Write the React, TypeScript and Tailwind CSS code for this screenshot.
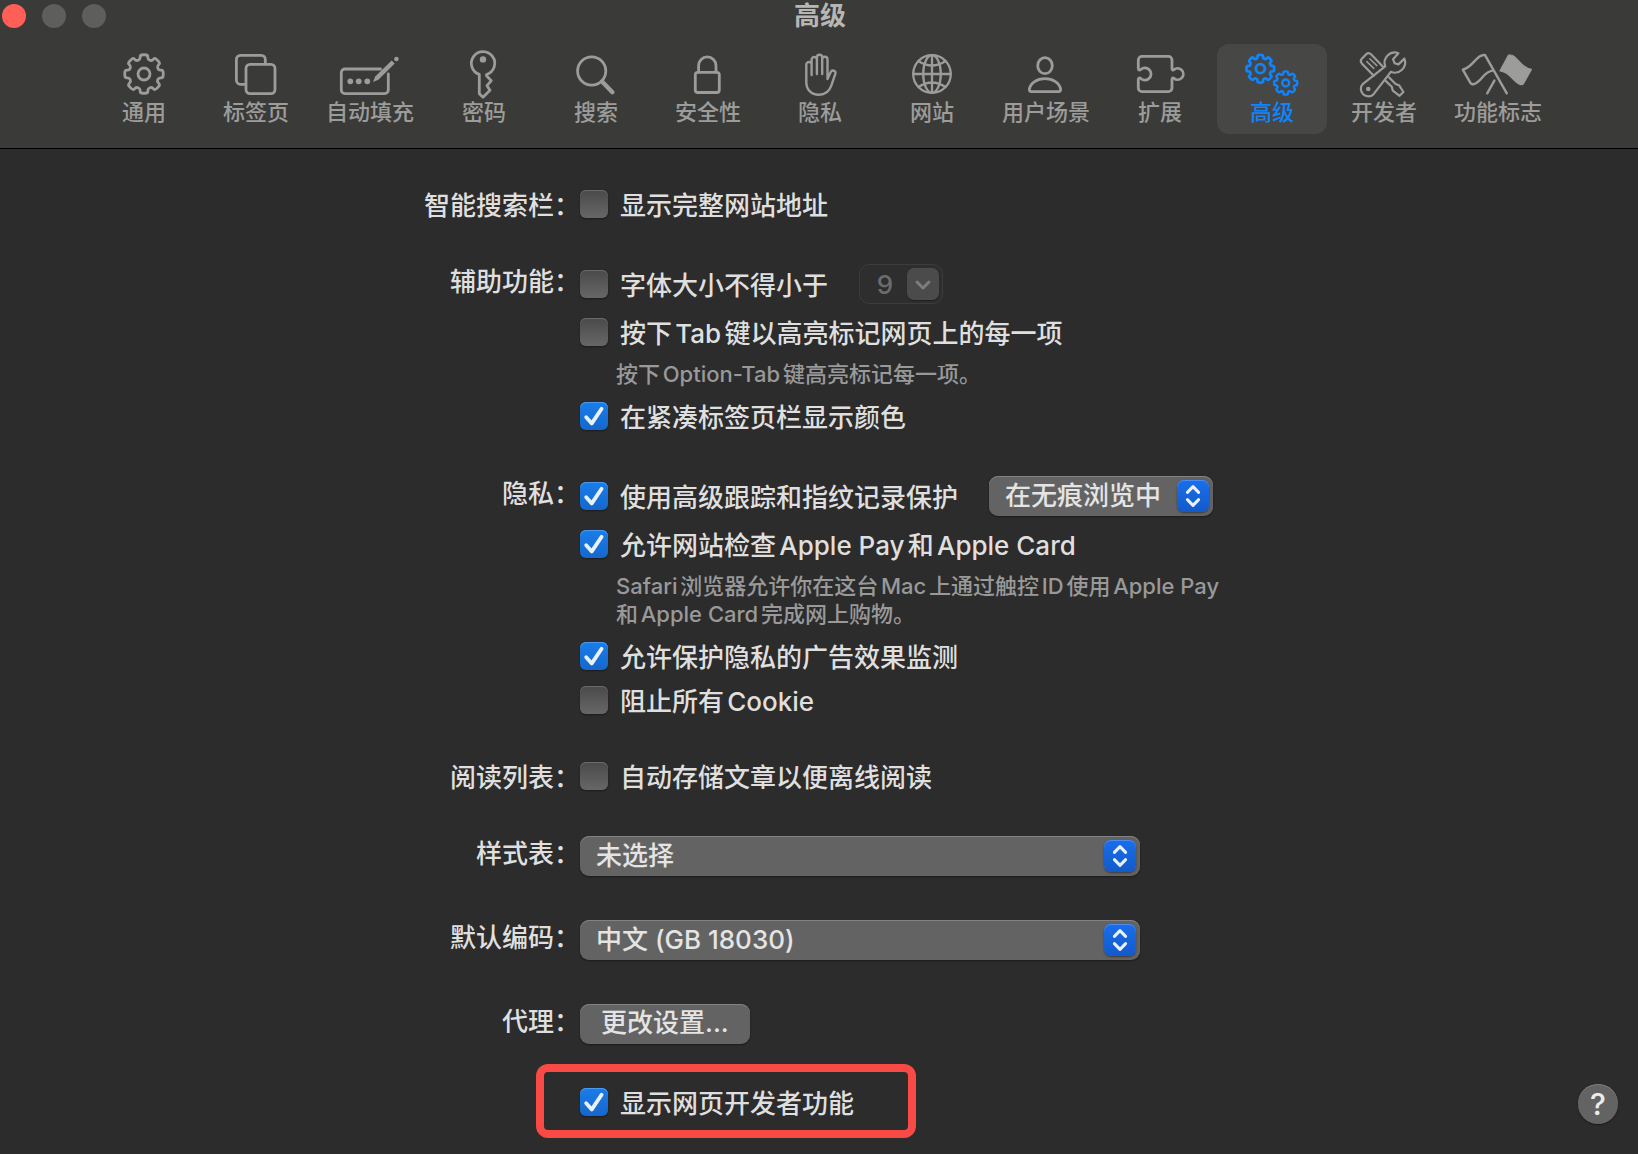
import { useState } from 'react'
import type { ReactNode } from 'react'

type Point = [number, number]

// Closed outline of a toothed wheel, with every corner softened
function gearPath(cx: number, cy: number, r: number) {
  const pts: Point[] = []
  const at = (deg: number, radius: number): Point => {
    const a = ((deg - 90) * Math.PI) / 180
    return [cx + Math.cos(a) * radius, cy + Math.sin(a) * radius]
  }
  for (let i = 0; i < 8; i++) {
    const a = i * 45
    pts.push(at(a - 15, r * 0.77), at(a - 11, r), at(a + 11, r), at(a + 15, r * 0.77))
  }
  const mix = (p: Point, q: Point, t: number) =>
    `${(p[0] + (q[0] - p[0]) * t).toFixed(2)} ${(p[1] + (q[1] - p[1]) * t).toFixed(2)}`
  const n = pts.length
  return (
    pts
      .map((p, i) => {
        const prev = pts[(i + n - 1) % n]
        const next = pts[(i + 1) % n]
        return `${i === 0 ? 'M' : 'L'}${mix(p, prev, 0.4)}Q${p[0].toFixed(2)} ${p[1].toFixed(2)} ${mix(p, next, 0.4)}`
      })
      .join('') + 'Z'
  )
}

const ICONS: Record<string, ReactNode> = {
  general: (
    <>
      <path d={gearPath(40, 26, 19.6)} />
      <circle cx="40" cy="26" r="6" />
    </>
  ),
  tabs: (
    <>
      <path d="M49.3 14.5V11.4a4 4 0 0 0-4-4H24.4a4 4 0 0 0-4 4V32.3a4 4 0 0 0 4 4H28.5" />
      <rect x="30" y="16.4" width="29" height="29.2" rx="4" />
    </>
  ),
  autofill: (
    <>
      <path d="M50.5 21H15a3.7 3.7 0 0 0-3.7 3.7V42a3.7 3.7 0 0 0 3.7 3.7H54.6a3.7 3.7 0 0 0 3.7-3.7V26" />
      <g fill="currentColor" stroke="none">
        <circle cx="20.3" cy="33.3" r="2.9" />
        <circle cx="28.7" cy="33.3" r="2.9" />
        <circle cx="37.3" cy="33.3" r="2.9" />
        <path d="M43 34l2.2-5.4L61.7 12.6l3 3L48.4 31.8z" />
        <circle cx="66.4" cy="11" r="2.3" />
      </g>
    </>
  ),
  passwords: (
    <>
      <path d="M35.3 26.4A11.7 11.7 0 1 1 42.5 26.5V27.8L47.3 32.7 43 37.7 46 42.3 39 49.2 35.3 45.8Z" />
      <circle cx="39" cy="11.4" r="3.2" fill="currentColor" stroke="none" />
    </>
  ),
  search: (
    <>
      <circle cx="35.7" cy="23" r="14.1" />
      <path d="M46 33.5L56.4 44.2" strokeWidth="4.4" />
    </>
  ),
  security: (
    <>
      <rect x="27.3" y="24.3" width="24" height="20.2" rx="2.5" />
      <path d="M30.6 24V17.6a8.7 8.7 0 0 1 17.4 0V24" />
    </>
  ),
  privacy: (
    <path
      strokeWidth="2.4"
      d="M31.6 27V16.6a2.65 2.65 0 0 0-5.3 0V34C26.3 41.5 31 46.7 39 46.7 45.6 46.7 49.4 43 51.3 37.6L55.3 25.8C56.2 22.6 52 21.4 50.6 24.2L47.5 31V11.4a2.65 2.65 0 0 0-5.3 0V26V9.4a2.65 2.65 0 0 0-5.3 0V26V11.6a2.65 2.65 0 0 0-5.3 0V22"
    />
  ),
  websites: (
    <g strokeWidth="2.3">
      <circle cx="40" cy="26" r="18.8" />
      <ellipse cx="40" cy="26" rx="8.8" ry="18.8" />
      <path d="M40 7.2V44.8M21.2 26H58.8M26.4 13Q40 22 53.6 13M26.4 39Q40 30 53.6 39" />
    </g>
  ),
  profiles: (
    <>
      <ellipse cx="39" cy="17.7" rx="7.3" ry="8" />
      <path d="M25.4 43.6C23.8 43.6 23.2 42.6 23.4 41.2 24.3 35 31 30.6 39 30.6S53.7 35 54.6 41.2C54.8 42.6 54.2 43.6 52.6 43.6Z" />
    </>
  ),
  extensions: (
    <path d="M22 8.3H48.3A3.7 3.7 0 0 1 52 12V20.4C52 22.2 53 22.6 54 21.6A5.7 5.7 0 1 1 54 30.4C53 29.4 52 29.8 52 31.6V40A3.7 3.7 0 0 1 48.3 43.7H22A3.7 3.7 0 0 1 18.3 40V31.6C18.3 29.8 19.6 29.4 20.8 30.5A6.1 6.1 0 1 0 20.8 21.5C19.6 22.6 18.3 22.2 18.3 20.4V12A3.7 3.7 0 0 1 22 8.3Z" />
  ),
  advanced: (
    <>
      <path d={gearPath(28.3, 20.7, 14.1)} />
      <circle cx="28.3" cy="20.7" r="4.5" />
      <path d={gearPath(53.7, 35, 11.8)} strokeWidth="2.4" />
      <circle cx="53.7" cy="35" r="3.5" strokeWidth="2.4" />
    </>
  ),
  developer: (
    <g strokeWidth="2.2">
      <path d="M29.8 27.8L17.8 15.4C16.4 13.8 16.5 12.2 17.8 10.8L22.2 6.2C23.8 4.9 25.6 4.9 27 6.3L39 18.8" />
      <path d="M22.8 13.6L29.8 20.4M25.8 10.8L32.8 17.6" strokeWidth="1.5" />
      <path d="M41.4 32.6L47.8 38.8 48.8 42.6 55.6 47.8 59.4 44 55 37.2 51.6 36 44.9 29.2" />
      <path d="M54.4 5.2A10.3 10.3 0 0 0 41.2 18.4L19 35.8A7.4 7.4 0 1 0 29.6 46.2L46.8 23.8A10.3 10.3 0 0 0 60.4 10.6L54.4 16.4 50.6 15.2 49 11.2Z" />
      <circle cx="24.3" cy="41" r="2.3" fill="currentColor" stroke="none" />
    </g>
  ),
  flags: (
    <g strokeWidth="2.4">
      <path d="M48.8 45.3L26.9 6.9C18.6 6.3 14.6 19.6 4.8 21.6L12.4 34.8C13.2 36.2 14.4 36.4 16 36C24.2 33.4 25.4 23.4 34.8 22.6" />
      <path d="M36.4 32.6L29.2 45.3" />
      <path
        d="M50.4 7.2C59 5.2 61 19.6 73.4 21.4L65.6 35.4C64.8 36.8 63.4 37 61.8 36.4C54.6 34 52.2 23.6 42 22.8Z"
        fill="currentColor"
        strokeWidth="1.2"
      />
    </g>
  ),
}

const TABS = [
  { id: 'general', label: '通用' },
  { id: 'tabs', label: '标签页' },
  { id: 'autofill', label: '自动填充', wide: true },
  { id: 'passwords', label: '密码' },
  { id: 'search', label: '搜索' },
  { id: 'security', label: '安全性' },
  { id: 'privacy', label: '隐私' },
  { id: 'websites', label: '网站' },
  { id: 'profiles', label: '用户场景', wide: true },
  { id: 'extensions', label: '扩展' },
  { id: 'advanced', label: '高级' },
  { id: 'developer', label: '开发者' },
  { id: 'flags', label: '功能标志', wide: true },
]

interface CheckProps {
  label: string
  defaultChecked?: boolean
}

function Check({ label, defaultChecked }: CheckProps) {
  return (
    <label className="flex items-center gap-3 whitespace-nowrap leading-7">
      <span className="relative flex size-7 shrink-0">
        <input
          type="checkbox"
          defaultChecked={defaultChecked}
          className="peer size-7 appearance-none rounded-md bg-linear-to-b from-[#4a4a4a] to-[#676767] shadow-[0_1px_2px_rgba(0,0,0,0.4),inset_0_1px_0_#6a6a6a] checked:from-[#1b7de9] checked:to-[#1567cc] checked:shadow-[0_1px_2px_rgba(0,0,0,0.4),inset_0_1px_0_#4c9af0]"
        />
        <svg viewBox="0 0 28 28" className="pointer-events-none absolute inset-0 hidden size-7 peer-checked:block" aria-hidden="true">
          <path d="M6.2 15.2L11.8 21.4 21.6 6.8" fill="none" stroke="#e8f1fd" strokeWidth="3.8" strokeLinecap="round" strokeLinejoin="round" />
        </svg>
      </span>
      <span className="-mb-0.5 pt-0.5">{label}</span>
    </label>
  )
}

interface PopupProps {
  id?: string
  label?: string
  options: string[]
  className: string
}

function Popup({ id, label, options, className }: PopupProps) {
  return (
    <div className={`relative ${className}`}>
      <select
        id={id}
        aria-label={label}
        className="block h-10 w-full appearance-none rounded-[9px] bg-[#636363] pr-10 pb-0.5 pl-4 text-[#e4e4e4] shadow-[0_1px_2px_rgba(0,0,0,0.4),inset_0_1px_0_#828282]"
      >
        {options.map(o => <option key={o}>{o}</option>)}
      </select>
      <span className="pointer-events-none absolute top-1 right-1 flex size-8 rounded-[7px] bg-linear-to-b from-[#1a6eea] to-[#135acb] shadow-[0_1px_2px_rgba(0,0,0,0.4),inset_0_1px_0_#4a8cf0]">
        <svg viewBox="0 0 32 32" className="size-8" aria-hidden="true">
          <path d="M10.4 12.4L16 6.6 21.6 12.4M10.4 19.6L16 25.4 21.6 19.6" fill="none" stroke="#e8f0fd" strokeWidth="3" strokeLinecap="round" strokeLinejoin="round" />
        </svg>
      </span>
    </div>
  )
}

interface RowProps {
  title?: string
  htmlFor?: string
  tall?: boolean
  className?: string
  children: ReactNode
}

function Row({ title, htmlFor, tall, className = '', children }: RowProps) {
  const leading = tall ? 'leading-9' : '-mb-0.5 pt-0.5 leading-7'
  return (
    <div className={`grid grid-cols-[290fr_529fr] ${className}`}>
      <div className={`text-right whitespace-nowrap ${leading}`}>
        {title && (htmlFor ? <label htmlFor={htmlFor}>{title}</label> : <span>{title}</span>)}
      </div>
      <div className="flex min-w-0 flex-col gap-3.5">{children}</div>
    </div>
  )
}

export default function App() {
  const [tab, setTab] = useState('advanced')

  return (
    <div className="flex min-h-screen flex-col bg-[#2c2c2c] text-[26px] font-medium text-[#dfdfdf] [font-family:Inter,'Noto_Sans_CJK_SC',sans-serif] [text-autospace:normal]">
      <header className="border-b border-black bg-[#3a3a38]">
        <div className="grid h-8 grid-cols-[1fr_auto_1fr] items-center pl-0.5">
          <div className="flex gap-4">
            <button type="button" aria-label="关闭" className="size-6 rounded-full bg-[#ff5f57]" />
            <button type="button" aria-label="最小化" className="size-6 rounded-full bg-[#5e5e5c]" />
            <button type="button" aria-label="缩放" className="size-6 rounded-full bg-[#5e5e5c]" />
          </div>
          <h1 className="leading-[30px] font-bold text-[#b6b6b5]">高级</h1>
        </div>
        <nav className="flex justify-center gap-0.5 pt-3 pb-3.5 pl-1.5">
          {TABS.map(t => (
            <button
              key={t.id}
              type="button"
              onClick={() => setTab(t.id)}
              className={`flex h-[90px] flex-col items-center rounded-xl pt-1 text-[22px] leading-6 whitespace-nowrap ${t.wide ? 'w-[114px]' : 'w-[110px]'} ${tab === t.id ? 'bg-[#474745] text-[#0f84ff]' : 'text-[#9c9c9a]'}`}
            >
              <svg
                viewBox="0 0 80 52"
                className="h-[52px] w-20"
                fill="none"
                stroke="currentColor"
                strokeWidth="2.8"
                strokeLinecap="round"
                strokeLinejoin="round"
                aria-hidden="true"
              >
                {ICONS[t.id]}
              </svg>
              {t.label}
            </button>
          ))}
        </nav>
      </header>

      <main className="flex-1 pt-[41px]">
        <Row title="智能搜索栏：">
          <Check label="显示完整网站地址" />
        </Row>

        <Row title="辅助功能：" tall className="mt-[46px]">
          <div className="flex items-center gap-[31px]">
            <Check label="字体大小不得小于" />
            <div className="flex h-10 w-[84px] items-center rounded-[10px] border border-[#3c3c3c] bg-[#2e2e2e] pr-[3px]">
              <input
                type="text"
                disabled
                defaultValue="9"
                aria-label="最小字体大小"
                className="w-0 flex-1 bg-transparent pr-3.5 text-right text-[#6c6c6c]"
              />
              <button type="button" disabled aria-label="选择字体大小" className="size-8 rounded-[7px] bg-[#4b4b4b] shadow-[0_1px_1px_rgba(0,0,0,0.3)]">
                <svg viewBox="0 0 32 32" className="size-8" aria-hidden="true">
                  <path d="M10 14L16 20 22 14" fill="none" stroke="#7d7d7d" strokeWidth="3" strokeLinecap="round" strokeLinejoin="round" />
                </svg>
              </button>
            </div>
          </div>
          <Check label="按下Tab键以高亮标记网页上的每一项" />
          <p className="pl-9 text-[22px] leading-7 text-[#999999]">按下Option-Tab键高亮标记每一项。</p>
          <Check label="在紧凑标签页栏显示颜色" defaultChecked />
        </Row>

        <Row title="隐私：" tall className="mt-[46px]">
          <div className="flex items-center gap-[31px]">
            <Check label="使用高级跟踪和指纹记录保护" defaultChecked />
            <Popup label="跟踪保护范围" options={['在无痕浏览中', '在所有浏览中']} className="w-56" />
          </div>
          <Check label="允许网站检查Apple Pay和Apple Card" defaultChecked />
          <p className="pl-9 text-[22px] leading-7 text-[#999999]">
            Safari浏览器允许你在这台Mac上通过触控ID使用Apple Pay
            <br />
            和Apple Card完成网上购物。
          </p>
          <div className="flex flex-col gap-4">
            <Check label="允许保护隐私的广告效果监测" defaultChecked />
            <Check label="阻止所有Cookie" />
          </div>
        </Row>

        <Row title="阅读列表：" className="mt-12">
          <Check label="自动存储文章以便离线阅读" />
        </Row>

        <Row title="样式表：" htmlFor="stylesheet" tall className="mt-[46px]">
          <Popup id="stylesheet" options={['未选择', '其他…']} className="w-[560px]" />
        </Row>

        <Row title="默认编码：" htmlFor="encoding" tall className="mt-11">
          <Popup id="encoding" options={['中文 (GB 18030)', 'Unicode (UTF-8)']} className="w-[560px]" />
        </Row>

        <Row title="代理：" tall className="mt-11">
          <button
            type="button"
            className="h-10 self-start rounded-[9px] bg-[#636363] px-[21px] pb-0.5 leading-[38px] text-[#e4e4e4] shadow-[0_1px_2px_rgba(0,0,0,0.4),inset_0_1px_0_#828282]"
          >
            更改设置...
          </button>
        </Row>

        <Row className="mt-5">
          <div className="flex items-end justify-between pr-5 pb-4">
            <div className="-ml-11 rounded-xl border-8 border-[#f94a46] pt-4 pr-[54px] pb-3.5 pl-9">
              <Check label="显示网页开发者功能" defaultChecked />
            </div>
            <button
              type="button"
              aria-label="帮助"
              className="mb-3.5 size-10 rounded-full bg-[#636363] text-center text-[30px] leading-10 text-[#ececec] shadow-[0_1px_2px_rgba(0,0,0,0.4),inset_0_1px_0_#7c7c7c]"
            >
              ?
            </button>
          </div>
        </Row>
      </main>
    </div>
  )
}
